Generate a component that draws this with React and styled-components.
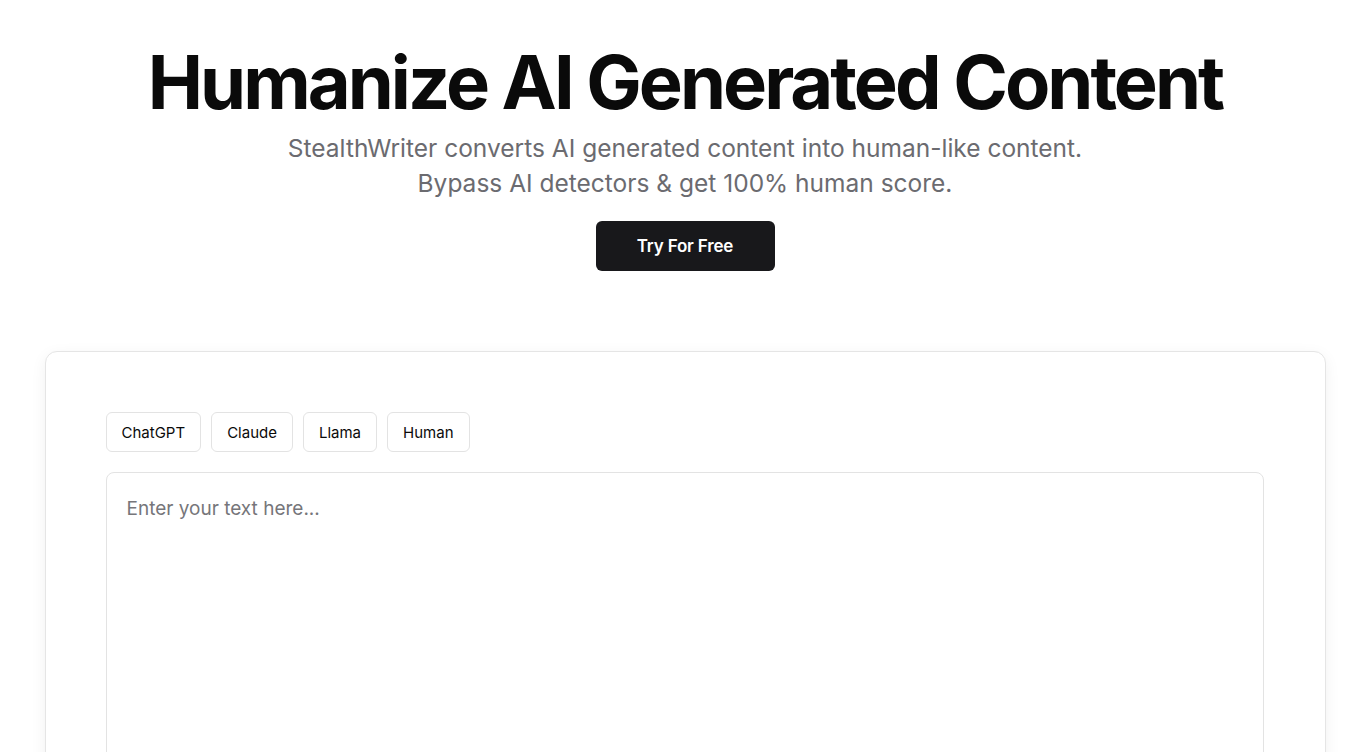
import React from "react";
import styled, { createGlobalStyle } from "styled-components";

const Global = createGlobalStyle`
  html, body { margin: 0; padding: 0; background: #ffffff; }
  body { font-family: Inter, "Noto Sans", sans-serif; color: #0a0a0a; }
  * { box-sizing: border-box; }
`;

const Page = styled.main`
  display: flex;
  flex-direction: column;
  align-items: center;
  padding: 38px 0 0 2px;
`;

const Hero = styled.section`
  display: flex;
  flex-direction: column;
  align-items: center;
  text-align: center;
`;

const Title = styled.h1`
  margin: 0 0 5px;
  font-family: Inter, sans-serif;
  font-weight: 700;
  font-size: 74px;
  line-height: 88px;
  letter-spacing: -0.04em;
  color: #0a0a0a;
`;

const Subtitle = styled.p`
  margin: 0;
  font-family: Inter, sans-serif;
  font-size: 24.5px;
  line-height: 35px;
  font-weight: 400;
  color: #6b6b70;
`;

const PrimaryButton = styled.button`
  margin-top: 20px;
  width: 179px;
  height: 50px;
  border: none;
  border-radius: 6px;
  background: #18181b;
  color: #ffffff;
  font-family: Inter, sans-serif;
  font-size: 17px;
  font-weight: 600;
  letter-spacing: -0.01em;
  cursor: pointer;
`;

const Card = styled.section`
  margin-top: 80px;
  width: 1281px;
  border: 1px solid #e5e5e5;
  border-radius: 12px;
  background: #ffffff;
  box-shadow: 0 4px 16px rgba(0, 0, 0, 0.06);
  padding: 60px 61px 60px 60px;
  display: flex;
  flex-direction: column;
  gap: 20px;
`;

const Tabs = styled.div`
  display: flex;
  gap: 10px;
`;

const Tab = styled.button`
  height: 40px;
  padding: 0 15px;
  border: 1px solid #e3e3e3;
  border-radius: 6px;
  background: #ffffff;
  font-family: Inter, sans-serif;
  font-size: 15px;
  color: #0a0a0a;
  cursor: pointer;
`;

const TextArea = styled.textarea`
  width: 100%;
  height: 420px;
  border: 1px solid #e3e3e3;
  border-radius: 8px;
  padding: 23px 20px;
  resize: none;
  font-family: Inter, sans-serif;
  font-size: 19px;
  line-height: 26px;
  color: #0a0a0a;
  outline: none;
  &::placeholder { color: #76767a; }
`;

export default function App() {
  const tabs = ["ChatGPT", "Claude", "Llama", "Human"];
  return (
    <>
      <Global />
      <Page>
        <Hero>
          <Title>Humanize AI Generated Content</Title>
          <Subtitle>
            StealthWriter converts AI generated content into human-like content.
            <br />
            Bypass AI detectors &amp; get 100% human score.
          </Subtitle>
          <PrimaryButton>Try For Free</PrimaryButton>
        </Hero>
        <Card>
          <Tabs>
            {tabs.map((t) => (
              <Tab key={t}>{t}</Tab>
            ))}
          </Tabs>
          <TextArea placeholder="Enter your text here..." />
        </Card>
      </Page>
    </>
  );
}
